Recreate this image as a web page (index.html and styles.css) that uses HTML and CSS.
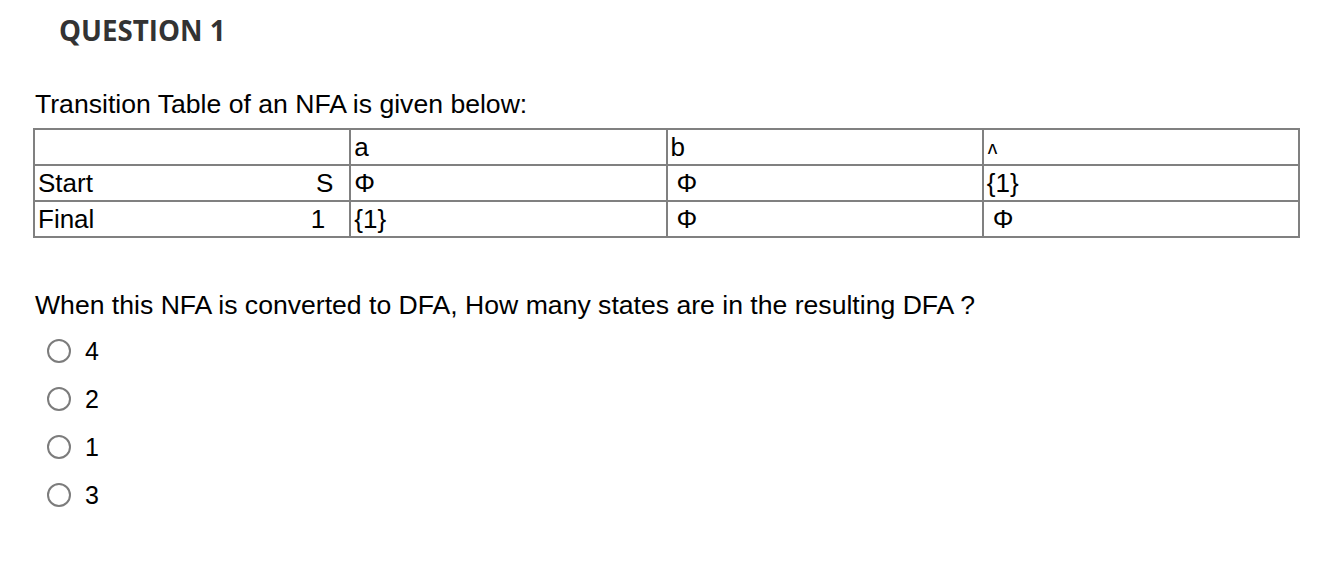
FILE: index.html
```html
<!DOCTYPE html>
<html lang="en">
<head>
<meta charset="utf-8">
<title>Question 1</title>
<link rel="stylesheet" href="styles.css">
</head>
<body>
<div class="page">
  <h2 class="q-title">QUESTION 1</h2>
  <p class="text">Transition Table of an NFA is given below:</p>
  <table class="tt">
    <tr>
      <td></td>
      <td>a</td>
      <td>b</td>
      <td><span class="lam">ʌ</span></td>
    </tr>
    <tr>
      <td><div class="split"><span>Start</span><span class="st-s">S</span></div></td>
      <td>Φ</td>
      <td><span class="sp">Φ</span></td>
      <td>{1}</td>
    </tr>
    <tr>
      <td><div class="split"><span>Final</span><span class="st-1">1</span></div></td>
      <td>{1}</td>
      <td><span class="sp">Φ</span></td>
      <td><span class="sp">Φ</span></td>
    </tr>
  </table>
  <p class="text question">When this NFA is converted to DFA, How many states are in the resulting DFA ?</p>
  <ul class="options">
    <li><label class="opt"><input type="radio" name="q1"><span>4</span></label></li>
    <li><label class="opt"><input type="radio" name="q1"><span>2</span></label></li>
    <li><label class="opt"><input type="radio" name="q1"><span>1</span></label></li>
    <li><label class="opt"><input type="radio" name="q1"><span>3</span></label></li>
  </ul>
</div>
</body>
</html>
```
FILE: styles.css
```css
html, body {
  margin: 0;
  padding: 0;
  background: #ffffff;
}
.page {
  padding: 0 18px 0 35px;
  font-family: "Liberation Sans", Arial, sans-serif;
  color: #000;
}
.q-title {
  margin: 15px 0 0 0;
  padding-left: 24px;
  font-family: "Open Sans", sans-serif;
  font-weight: 700;
  font-size: 27.7px;
  line-height: 30px;
  color: #333333;
}
.text {
  margin: 44px 0 0 0;
  font-size: 26.6px;
  line-height: 30px;
}
.tt {
  margin: 9px 0 0 -2px;
  width: 1267px;
  border-collapse: collapse;
  table-layout: fixed;
  font-size: 26px;
  line-height: 30px;
}
.tt td {
  border: 2px solid #808080;
  padding: 0 3px 1px 3px;
  height: 33px;
  vertical-align: middle;
  text-align: left;
  white-space: nowrap;
}
.split {
  display: flex;
  justify-content: space-between;
}
.st-s {
  margin-right: 13px;
}
.st-1 {
  margin-right: 21px;
}
.sp {
  padding-left: 6px;
}
.lam {
  font-size: 19px;
  padding-left: 1px;
}
.question {
  margin-top: 52px;
}
.options {
  list-style: none;
  margin: 7px 0 0 0;
  padding: 0;
}
.opt {
  display: flex;
  align-items: center;
  height: 48px;
  font-size: 25px;
}
.opt input {
  appearance: none;
  -webkit-appearance: none;
  margin: 0 14px 0 12px;
  width: 24px;
  height: 24px;
  border: 2px solid #7c7c7c;
  border-radius: 50%;
  background: #fff;
  box-sizing: border-box;
}
```
